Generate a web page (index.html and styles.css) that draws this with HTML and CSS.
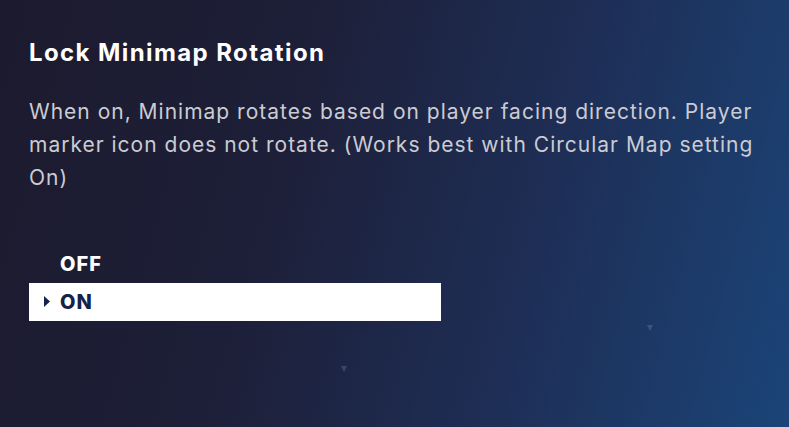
FILE: index.html
```html
<!DOCTYPE html>
<html lang="en">
<head>
    <meta charset="UTF-8">
    <meta name="viewport" content="width=device-width, initial-scale=1.0">
    <title>Lock Minimap Rotation</title>
    <link rel="stylesheet" href="styles.css">
</head>
<body>
    <div class="setting-panel">
      <h2 class="setting-title">Lock Minimap Rotation</h2>
      <p class="setting-description">When on, Minimap rotates based on player facing direction. Player marker icon does not rotate. (Works best with Circular Map setting On)</p>

      <ul class="option-list">
        <li class="option">OFF</li>
        <li class="option selected">
          <svg class="caret" width="6" height="11" viewBox="0 0 6 11"><path d="M0 0 L6 5.5 L0 11 Z" fill="#14234a"/></svg>
          ON
        </li>
      </ul>
    </div>

    <!-- faint background sparkles -->
    <span class="spark spark-a"></span>
    <span class="spark spark-b"></span>
</body>
</html>
```

FILE: styles.css
```css
html,
body {
  height: 100%;
}

body {
  position: relative;
  margin: 0;
  overflow: hidden;
  background: linear-gradient(105deg, #1c1a2e 0%, #1d1f38 35%, #1e2d54 65%, #1b4478 100%);
  font-family: Inter, "Noto Sans", sans-serif;
  color: #fff;
}

.setting-panel {
  padding: 36px 0 0 29px;
  width: 740px;
}

.setting-title {
  margin: 0;
  font-size: 24px;
  font-weight: 700;
  letter-spacing: 1.4px;
  line-height: 34px;
}

.setting-description {
  margin: 25px 0 0;
  font-size: 21px;
  letter-spacing: 1px;
  line-height: 33px;
  color: #cbcbd3;
}

.option-list {
  list-style: none;
  margin: 51px 0 0;
  padding: 0;
  width: 412px;
}

.option {
  display: flex;
  align-items: center;
  height: 38px;
  padding-left: 31px;
  font-size: 20px;
  font-weight: 800;
  letter-spacing: 1px;
}

.option.selected {
  position: relative;
  background: #fff;
  color: #14234a;
}

.caret {
  position: absolute;
  left: 15px;
  top: 13px;
}

.spark {
  position: absolute;
  width: 0;
  height: 0;
  border-left: 3px solid transparent;
  border-right: 3px solid transparent;
  border-top: 6px solid rgba(120, 150, 200, 0.3);
}

.spark-a {
  left: 341px;
  top: 366px;
}

.spark-b {
  left: 647px;
  top: 325px;
}
```
